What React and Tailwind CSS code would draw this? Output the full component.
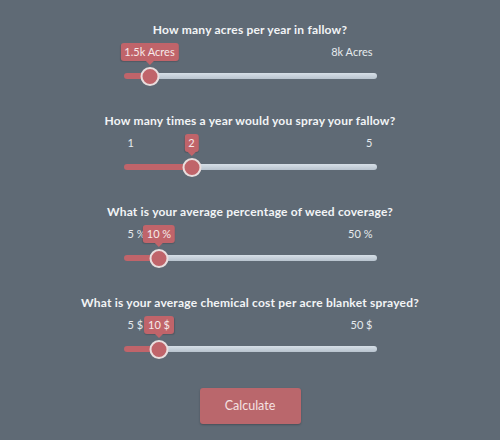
const questions = [
  { title: 'How many acres per year in fallow?', min: null, max: '8k Acres', value: '1.5k Acres', pos: 26 },
  { title: 'How many times a year would you spray your fallow?', min: '1', max: '5', value: '2', pos: 68 },
  { title: 'What is your average percentage of weed coverage?', min: '5 %', max: '50 %', value: '10 %', pos: 35.5 },
  { title: 'What is your average chemical cost per acre blanket sprayed?', min: '5 $', max: '50 $', value: '10 $', pos: 35.5 },
]

function Slider({ min, max, value, pos }) {
  return (
    <div className="relative mx-auto flex h-[73px] w-[253px] flex-col">
      <div className="flex h-[26px] items-center justify-between px-[4px] text-[11px] text-[#e6eaee]">
        <span>{min}</span>
        <span>{max}</span>
      </div>
      {/* track: filled part up to the handle, rest light */}
      <div className="mt-[8px] flex h-[6px] overflow-hidden rounded-full">
        <div className="bg-[#c0646a]" style={{ width: pos }} />
        <div className="flex-1 bg-gradient-to-b from-[#d6dfe7] to-[#b8c3ce]" />
      </div>
      <div
        className="absolute top-[27.5px] h-[19px] w-[19px] -translate-x-1/2 rounded-full border-2 border-[#e9dede] bg-[#c0646a]"
        style={{ left: pos }}
      />
      <div className="absolute top-[4px] -translate-x-1/2" style={{ left: pos }}>
        <div className="relative whitespace-nowrap rounded-[3px] bg-[#c0646a] px-[4px] py-[2px] text-[11px] leading-[14px] text-[#f6e9e9] shadow-[0_1px_1px_rgba(0,0,0,0.15)]">
          {value}
          <div className="absolute left-1/2 top-full h-0 w-0 -translate-x-1/2 border-x-[4px] border-t-[4px] border-x-transparent border-t-[#c0646a]" />
        </div>
      </div>
    </div>
  )
}

export default function App() {
  return (
    <div className="flex h-[440px] w-[500px] flex-col bg-[#5f6a75] pt-[21px] font-['Lato',sans-serif]">
      {questions.map(q => (
        <div key={q.title} className="flex flex-col">
          <h2 className="text-center text-[12px] font-bold leading-[18px] tracking-[0.2px] text-[#f2f4f6]">{q.title}</h2>
          <Slider {...q} />
        </div>
      ))}
      <div className="mt-[3px] flex justify-center">
        <button className="h-[36px] w-[101px] rounded-[3px] bg-[#ba676c] text-[12.5px] text-[#f5e1e1] shadow-[0_1px_2px_rgba(0,0,0,0.25)]">
          Calculate
        </button>
      </div>
    </div>
  )
}
